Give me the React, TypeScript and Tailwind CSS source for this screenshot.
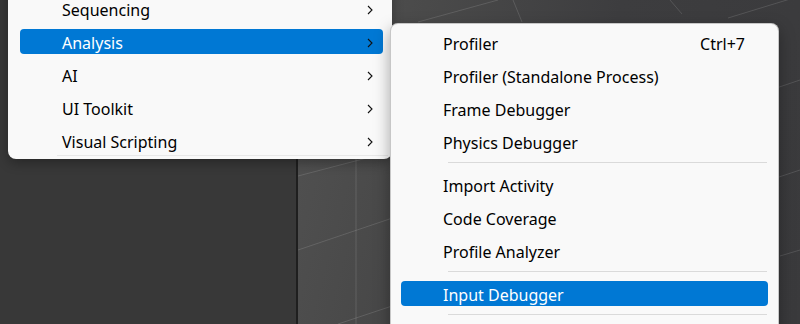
import React from 'react';

type Item = { label: string; shortcut?: string; active?: boolean } | 'sep';

const mainItems = [
    { label: 'Sequencing' },
    { label: 'Analysis', active: true },
    { label: 'AI' },
    { label: 'UI Toolkit' },
    { label: 'Visual Scripting' },
];

const analysisItems: Item[] = [
    { label: 'Profiler', shortcut: 'Ctrl+7' },
    { label: 'Profiler (Standalone Process)' },
    { label: 'Frame Debugger' },
    { label: 'Physics Debugger' },
    'sep',
    { label: 'Import Activity' },
    { label: 'Code Coverage' },
    { label: 'Profile Analyzer' },
    'sep',
    { label: 'Input Debugger', active: true },
    'sep',
];

function Chevron() {
    return (
        <svg width="6" height="10" viewBox="0 0 6 10" className="shrink-0">
            <path d="M1 1 L5 5 L1 9" fill="none" stroke="#111" strokeWidth="1.1" />
        </svg>
    );
}

function SceneGrid() {
    // faint grid lines of the scene view behind the menus
    return (
        <svg className="absolute inset-0" width="502" height="324" viewBox="0 0 502 324">
            <g stroke="rgba(255,255,255,0.13)" strokeWidth="1" fill="none">
                <line x1="0" y1="176" x2="260" y2="108" />
                <line x1="0" y1="250" x2="502" y2="80" />
                <line x1="40" y1="324" x2="502" y2="170" />
                <line x1="58" y1="0" x2="58" y2="324" />
                <line x1="120" y1="22" x2="200" y2="0" />
                <line x1="215" y1="0" x2="224" y2="22" />
                <line x1="372" y1="0" x2="384" y2="14" />
                <line x1="430" y1="18" x2="502" y2="-4" />
                <line x1="482" y1="256" x2="502" y2="250" />
            </g>
        </svg>
    );
}

export default function App() {
    return (
        <div className="relative flex w-[800px] h-[324px] overflow-hidden bg-[#383838] font-['Noto_Sans',sans-serif] text-[16px]">
            {/* left dock panel */}
            <div className="w-[296px] h-full bg-[#383838]" />
            <div className="w-[2px] h-full bg-[#1f1f1f]" />
            {/* scene view */}
            <div className="relative flex-1 h-full bg-[linear-gradient(105deg,#525252_0%,#4a4a4a_22%,#3d3d3f_55%,#3a3a3c_100%)]">
                <SceneGrid />
            </div>

            {/* main menu */}
            <div className="absolute left-[8px] top-[-12px] w-[384px] pt-[4px] pb-[2px] bg-[#f9f9f9] rounded-b-[8px] shadow-[0_4px_12px_rgba(0,0,0,0.3)]">
                {mainItems.map((it) => (
                    <div key={it.label} className="h-[33px] py-[4px] pl-[12px] pr-[9px]">
                        <div
                            className={`h-[25px] rounded-[4px] flex items-start justify-between pl-[42px] pr-[10px] pt-[3px] ${
                                it.active ? 'bg-[#0078d4] text-white' : 'text-black'
                            }`}
                        >
                            <span className="leading-[22px]">{it.label}</span>
                            <span className="h-[22px] flex items-center">
                                <Chevron />
                            </span>
                        </div>
                    </div>
                ))}
                <div className="absolute left-[49px] right-[4px] bottom-[3px] h-px bg-[#e8e8e8]" />
            </div>

            {/* Analysis submenu */}
            <div className="absolute left-[390px] top-[23px] w-[389px] pt-[2px] pb-[20px] bg-[#f9f9f9] border border-black/20 rounded-[8px] shadow-[0_6px_16px_rgba(0,0,0,0.35)]">
                {analysisItems.map((it, i) =>
                    it === 'sep' ? (
                        <div key={i} className="h-[10px] pt-[4px] pl-[57px] pr-[11px]">
                            <div className="h-px bg-[#dadada]" />
                        </div>
                    ) : (
                        <div key={i} className="h-[33px] py-[4px] pl-[10px] pr-[10px]">
                            <div
                                className={`h-[25px] rounded-[4px] flex items-start justify-between pl-[42px] pr-[23px] pt-[3px] ${
                                    it.active ? 'bg-[#0078d4] text-white' : 'text-black'
                                }`}
                            >
                                <span className="leading-[22px]">{it.label}</span>
                                {it.shortcut && <span className="leading-[22px]">{it.shortcut}</span>}
                            </div>
                        </div>
                    )
                )}
            </div>
        </div>
    );
}
